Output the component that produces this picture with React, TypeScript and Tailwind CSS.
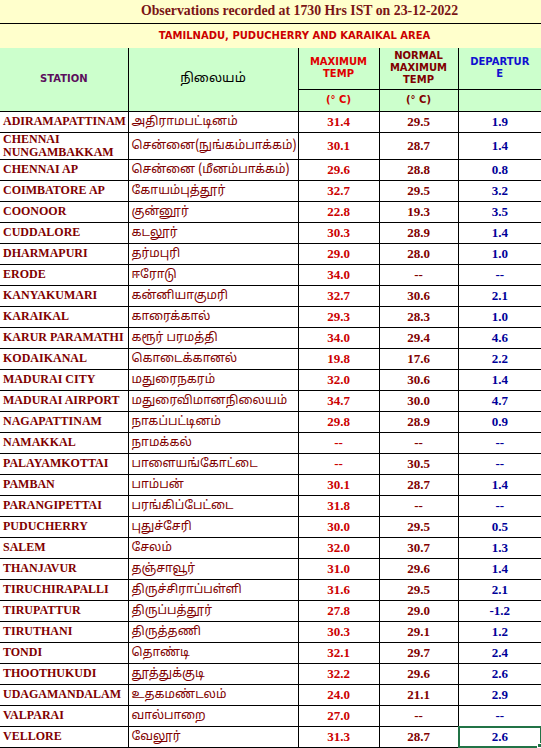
const rows: [string, string, string, string, string][] = [
  ["ADIRAMAPATTINAM", "அதிராமபட்டினம்", "31.4", "29.5", "1.9"],
  ["CHENNAI NUNGAMBAKKAM", "சென்னை(நுங்கம்பாக்கம்)", "30.1", "28.7", "1.4"],
  ["CHENNAI AP", "சென்னை (மீனம்பாக்கம்)", "29.6", "28.8", "0.8"],
  ["COIMBATORE AP", "கோயம்புத்தூர்", "32.7", "29.5", "3.2"],
  ["COONOOR", "குன்னூர்", "22.8", "19.3", "3.5"],
  ["CUDDALORE", "கடலூர்", "30.3", "28.9", "1.4"],
  ["DHARMAPURI", "தர்மபுரி", "29.0", "28.0", "1.0"],
  ["ERODE", "ஈரோடு", "34.0", "--", "--"],
  ["KANYAKUMARI", "கன்னியாகுமரி", "32.7", "30.6", "2.1"],
  ["KARAIKAL", "காரைக்கால்", "29.3", "28.3", "1.0"],
  ["KARUR PARAMATHI", "கரூர் பரமத்தி", "34.0", "29.4", "4.6"],
  ["KODAIKANAL", "கொடைக்கானல்", "19.8", "17.6", "2.2"],
  ["MADURAI CITY", "மதுரைநகரம்", "32.0", "30.6", "1.4"],
  ["MADURAI AIRPORT", "மதுரைவிமானநிலையம்", "34.7", "30.0", "4.7"],
  ["NAGAPATTINAM", "நாகப்பட்டினம்", "29.8", "28.9", "0.9"],
  ["NAMAKKAL", "நாமக்கல்", "--", "--", "--"],
  ["PALAYAMKOTTAI", "பாளையங்கோட்டை", "--", "30.5", "--"],
  ["PAMBAN", "பாம்பன்", "30.1", "28.7", "1.4"],
  ["PARANGIPETTAI", "பரங்கிப்பேட்டை", "31.8", "--", "--"],
  ["PUDUCHERRY", "புதுச்சேரி", "30.0", "29.5", "0.5"],
  ["SALEM", "சேலம்", "32.0", "30.7", "1.3"],
  ["THANJAVUR", "தஞ்சாவூர்", "31.0", "29.6", "1.4"],
  ["TIRUCHIRAPALLI", "திருச்சிராப்பள்ளி", "31.6", "29.5", "2.1"],
  ["TIRUPATTUR", "திருப்பத்தூர்", "27.8", "29.0", "-1.2"],
  ["TIRUTHANI", "திருத்தணி", "30.3", "29.1", "1.2"],
  ["TONDI", "தொண்டி", "32.1", "29.7", "2.4"],
  ["THOOTHUKUDI", "தூத்துக்குடி", "32.2", "29.6", "2.6"],
  ["UDAGAMANDALAM", "உதகமண்டலம்", "24.0", "21.1", "2.9"],
  ["VALPARAI", "வால்பாறை", "27.0", "--", "--"],
  ["VELLORE", "வேலூர்", "31.3", "28.7", "2.6"],
]

const serif = "font-['Liberation_Serif','Times_New_Roman',serif]"
const head = "font-['DejaVu_Sans',Tahoma,sans-serif] font-bold text-[10px] leading-[12px]"
const tamil = "font-['Noto_Sans_Tamil',Latha,'Noto_Sans',sans-serif]"

export default function App() {
  return (
    <div className="w-[541px] h-[748px] overflow-hidden bg-white">
      <table className="w-[541px] table-fixed border-collapse">
        <colgroup>
          <col className="w-[128px]" />
          <col className="w-[170px]" />
          <col className="w-[81px]" />
          <col className="w-[79px]" />
          <col className="w-[83px]" />
        </colgroup>
        <tbody>
          <tr className="h-[23px] bg-[#ffffcc]">
            <td colSpan={5} className={`${serif} border-b border-black pl-[58px] text-center text-[13.8px] font-bold text-[#7a1515]`}>
              Observations recorded at 1730 Hrs IST on 23-12-2022
            </td>
          </tr>
          <tr className="h-[25px] bg-[#ffffcc]">
            <td colSpan={5} className={`${head} pl-[48px] text-center text-[10.5px] text-[#cc0000]`}>
              TAMILNADU, PUDUCHERRY AND KARAIKAL AREA
            </td>
          </tr>
          <tr className="h-[41px] bg-[#ccffcc]">
            <td rowSpan={2} className={`${head} border-r border-b border-black text-center text-[#5c0f5c]`}>STATION</td>
            <td rowSpan={2} className={`${tamil} border-r border-b border-black text-center text-[13px] text-black`}>நிலையம்</td>
            <td className={`${head} border-r border-b border-black text-center text-[#e00000]`}>MAXIMUM<br />TEMP</td>
            <td className={`${head} border-r border-b border-black text-center text-[#800000]`}>NORMAL<br />MAXIMUM<br />TEMP</td>
            <td className={`${head} border-b border-black text-center text-[#1010d0]`}>DEPARTUR<br />E</td>
          </tr>
          <tr className="h-[22px] bg-[#ccffcc]">
            <td className={`${head} border-r border-b border-black text-center text-[#e00000]`}>(° C)</td>
            <td className={`${head} border-r border-b border-black text-center text-[#800000]`}>(° C)</td>
            <td className="border-b border-black"></td>
          </tr>
          {rows.map(([name, ta, max, norm, dep], i) => (
            <tr key={name} className={i === 1 ? "h-[27px]" : "h-[21px]"}>
              <td className={`${serif} border-r border-b border-black px-[3px] text-[12px] leading-[13px] font-bold text-[#800000]`}>{name}</td>
              <td className={`${tamil} border-r border-b border-black pl-[3px] pr-0 pt-[2px] text-[12.2px] leading-[13px] text-[#800000] whitespace-nowrap`}>{ta}</td>
              <td className={`${serif} border-r border-b border-black text-center text-[13px] font-bold text-[#cc0000]`}>{max}</td>
              <td className={`${serif} border-r border-b border-black text-center text-[13px] font-bold text-[#800000]`}>{norm}</td>
              <td className={`${serif} relative border-b border-black text-center text-[13px] font-bold text-[#000099]`}>
                {dep}
                {i === rows.length - 1 && (
                  <>
                    <span className="absolute inset-[-1px] border-2 border-[#217346]"></span>
                    <span className="absolute right-[-1px] bottom-[-1px] h-[5px] w-[5px] bg-[#217346] border border-white"></span>
                  </>
                )}
              </td>
            </tr>
          ))}
        </tbody>
      </table>
    </div>
  )
}
